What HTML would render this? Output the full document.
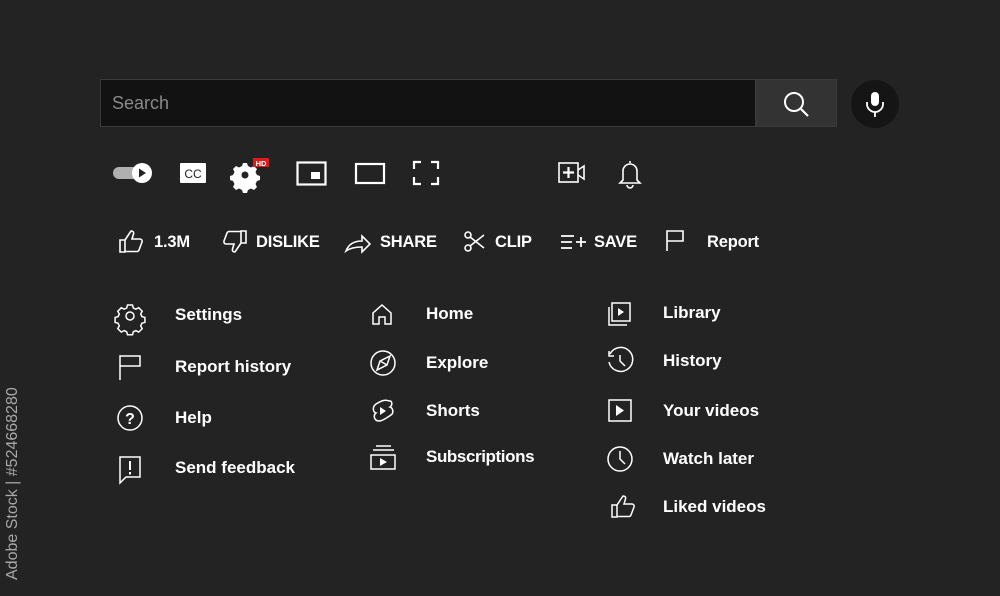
<!DOCTYPE html>
<html><head><meta charset="utf-8"><style>
html,body{margin:0;padding:0;}
body{width:1000px;height:596px;background:#232323;position:relative;overflow:hidden;font-family:"Liberation Sans",sans-serif;color:#fff;}
.t{position:absolute;font-size:17px;font-weight:bold;line-height:20px;white-space:nowrap;transform:translateY(-50%);}
.a{font-size:16.5px;letter-spacing:-0.2px;}
#search{position:absolute;left:100px;top:79px;width:656px;height:48px;background:#121212;border:1px solid #3a3a3a;box-sizing:border-box;}
#search span{position:absolute;left:11px;top:13px;font-size:18px;color:#8a8a8a;}
#btn{position:absolute;left:756px;top:79px;width:81px;height:48px;background:#333;border:1px solid #3a3a3a;box-sizing:border-box;}
#mic{position:absolute;left:851px;top:80px;width:48px;height:48px;border-radius:50%;background:#151515;}
svg{position:absolute;left:0;top:0;}
</style></head><body>
<div id="search"><span>Search</span></div>
<div id="btn"></div>
<div id="mic"></div>
<svg width="1000" height="596" viewBox="0 0 1000 596" fill="none" stroke="#fff" stroke-width="1.8">
<circle cx="794" cy="102" r="9" stroke-width="2"/><line x1="800.5" y1="108.5" x2="808" y2="116" stroke-width="2.2"/>
<rect x="871" y="92" width="8" height="14" rx="4" fill="#fff" stroke="none"/>
<path d="M867 102v2a8 8 0 0 0 16 0v-2M875 112v5" stroke-width="1.8"/>
<rect x="113" y="167" width="30" height="12" rx="6" fill="#b0b0b0" stroke="none"/>
<circle cx="142" cy="173" r="10" fill="#fff" stroke="none"/>
<path d="M139 168.5l7 4.5-7 4.5z" fill="#222" stroke="none"/>
<rect x="180" y="163" width="26" height="20" rx="1" fill="#fff" stroke="none"/>
<text x="193" y="178" fill="#222" stroke="none" font-size="12" text-anchor="middle" font-family="Liberation Sans">CC</text>
<g transform="translate(245,175)">
<path d="M-2-12h4l1 3 3 1.5 3-1.5 3 3-1.5 3 1.5 3 3 1v4l-3 1-1.5 3 1.5 3-3 3-3-1.5-3 1.5-1 3h-4l-1-3-3-1.5-3 1.5-3-3 1.5-3-1.5-3-3-1v-4l3-1 1.5-3-1.5-3 3-3 3 1.5 3-1.5z" fill="#fff" stroke="none" transform="scale(1)"/>
<circle r="3.5" fill="#232323" stroke="none"/>
</g>
<rect x="253" y="158" width="16" height="9" fill="#e01919" stroke="none"/>
<text x="261" y="166" fill="#fff" stroke="none" font-size="7.5" font-weight="bold" text-anchor="middle" font-family="Liberation Sans">HD</text>
<rect x="297.5" y="162.5" width="28" height="22" stroke-width="2.2"/>
<rect x="311" y="172" width="9" height="7" fill="#fff" stroke="none"/>
<rect x="356" y="164" width="28" height="19" stroke-width="2.2"/>
<path d="M414 169v-7h7M431 162h7v7M438 177v7h-7M421 184h-7v-7" stroke-width="2.2"/>
<rect x="559" y="163" width="19" height="19" stroke-width="1.6"/>
<path d="M578 170l6-4v13l-6-4" stroke-width="1.6"/>
<path d="M568.5 167v11M563 172.5h11" stroke-width="2.2"/>
<path d="M623 180v-9a7 7 0 0 1 14 0v9l3 3h-20z M630 161v2 M627 185a3 3 0 0 0 6 0" stroke-width="1.6"/>
<g stroke-width="1.6">
<path d="M120 240h5v12h-5z M125 240l6-9c2 0 3 1 2.5 3l-1.5 5h8c1.5 0 2.5 1.5 2 3l-3 8c-.5 1-1 1.5-2 1.5H125"/>
<g transform="translate(366,483) rotate(180)"><path d="M120 240h5v12h-5z M125 240l6-9c2 0 3 1 2.5 3l-1.5 5h8c1.5 0 2.5 1.5 2 3l-3 8c-.5 1-1 1.5-2 1.5H125"/></g>
<path d="M346 251c3-8 10-10 16-10v-5l8 8-8 8v-5c-6 0-12 1-16 4z"/>
<circle cx="468" cy="235" r="3"/><circle cx="468" cy="248" r="3"/>
<path d="M470 237l14 11M470 246l14-11"/>
<path d="M561 236h13M561 242h11M561 248h11M576 242h10M581 237v10" stroke-width="1.8"/>
<path d="M667 251v-20h16v10h-16"/>
</g>
<g stroke-width="1.5">
<g transform="translate(130,316)"><path d="M-2.5-11h5l.8 3 2.6 1.2 2.8-1.5 3.5 3.5-1.5 2.8 1.2 2.6 3 .8v5l-3 .8-1.2 2.6 1.5 2.8-3.5 3.5-2.8-1.5-2.6 1.2-.8 3h-5l-.8-3-2.6-1.2-2.8 1.5-3.5-3.5 1.5-2.8-1.2-2.6-3-.8v-5l3-.8 1.2-2.6-1.5-2.8 3.5-3.5 2.8 1.5 2.6-1.2z"/><circle r="4"/></g>
<path d="M120 380v-24h20v10h-20"/>
<circle cx="130" cy="418" r="12"/>
<text x="130" y="424" fill="#fff" stroke="none" font-size="16" font-weight="bold" text-anchor="middle" font-family="Liberation Sans">?</text>
<path d="M120 457h20v20h-14l-6 6z"/>
<path d="M130 461v9M130 472v2.5" stroke-width="2"/>
<path d="M373 324v-11l9-8 9 8v11h-6v-7h-6v7z"/>
<circle cx="383" cy="363" r="12"/>
<path d="M390 356l-10 5-3 9 10-5z M380 361l7 4" />
<path d="M389 401c-4-2-8 0-13 3-4 3-3 8 0 9-3 2-2 8 3 8 4 0 9-4 12-6 3-2 2-7-1-8 3-2 2-7-1-6z"/>
<path d="M380 407l6 4-6 4z" fill="#fff" stroke="none"/>
<path d="M376 446h15M373 450h21M371 455h24v14h-24z"/>
<path d="M380 458l7 4-7 4z" fill="#fff" stroke="none"/>
<path d="M609 307v18h18" /><rect x="612" y="303" width="18" height="18"/>
<path d="M618 308l6 4-6 4z" fill="#fff" stroke="none"/>
<path d="M610 354a12 12 0 1 1 -1 8 M609 351v5h5 M620 355v6l5 5"/>
<rect x="609" y="400" width="22" height="21"/>
<path d="M616 405l8 5.5-8 5.5z" fill="#fff" stroke="none"/>
<circle cx="620" cy="459" r="12"/><path d="M620 451v8l5 5"/>
<path d="M612 505h5v12h-5z M617 505l6-9c2 0 3 1 2.5 3l-1.5 5h8c1.5 0 2.5 1.5 2 3l-3 8c-.5 1-1 1.5-2 1.5H617"/>
</g>
</svg>
<div class="t a" style="left:154px;top:242px">1.3M</div>
<div class="t a" style="left:256px;top:242px">DISLIKE</div>
<div class="t a" style="left:380px;top:242px">SHARE</div>
<div class="t a" style="left:495px;top:242px">CLIP</div>
<div class="t a" style="left:594px;top:242px">SAVE</div>
<div class="t a" style="left:707px;top:242px">Report</div>
<div class="t" style="left:175px;top:315px">Settings</div>
<div class="t" style="left:175px;top:367px">Report history</div>
<div class="t" style="left:175px;top:418px">Help</div>
<div class="t" style="left:175px;top:468px">Send feedback</div>
<div class="t" style="left:426px;top:314px">Home</div>
<div class="t" style="left:426px;top:363px">Explore</div>
<div class="t" style="left:426px;top:411px">Shorts</div>
<div class="t" style="left:426px;top:457px;letter-spacing:-0.4px">Subscriptions</div>
<div class="t" style="left:663px;top:313px">Library</div>
<div class="t" style="left:663px;top:361px">History</div>
<div class="t" style="left:663px;top:411px">Your videos</div>
<div class="t" style="left:663px;top:459px">Watch later</div>
<div class="t" style="left:663px;top:507px">Liked videos</div>
<div style="position:absolute;left:4px;top:580px;transform:rotate(-90deg);transform-origin:0 0;font-size:16px;color:#a8a8a8;white-space:nowrap;">Adobe Stock | #524668280</div>
</body></html>
